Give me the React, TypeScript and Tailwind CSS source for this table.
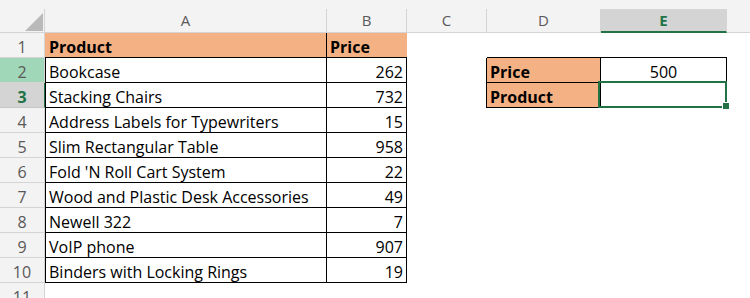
import { ReactNode } from "react";

/* ─────────────────────── Sheet data ─────────────────────── */
const PRODUCTS: [string, number][] = [
  ["Bookcase", 262],
  ["Stacking Chairs", 732],
  ["Address Labels for Typewriters", 15],
  ["Slim Rectangular Table", 958],
  ["Fold 'N Roll Cart System", 22],
  ["Wood and Plastic Desk Accessories", 49],
  ["Newell 322", 7],
  ["VoIP phone", 907],
  ["Binders with Locking Rings", 19],
];

const COLS = [
  { key: "A", w: "w-[282px]" },
  { key: "B", w: "w-[80px]" },
  { key: "C", w: "w-[80px]" },
  { key: "D", w: "w-[114px]" },
  { key: "E", w: "w-[126px]" },
];

/* ─────────────────────── Cells ─────────────────────── */
function Cell({
  className = "",
  children,
}: {
  className?: string;
  children?: ReactNode;
}) {
  return (
    <div className={`relative flex h-[25px] shrink-0 items-end text-[16px] leading-[20px] text-black ${className}`}>
      {children}
    </div>
  );
}

function RowHead({ n }: { n: number }) {
  const cls =
    n === 2
      ? "bg-[#a0d7b8] text-[#595959] border-r border-[#d4d4d4]"
      : n === 3
      ? "bg-[#d4d4d4] text-[#217346] font-bold border-r border-r-[#217346] border-b-[#c6c6c6]"
      : "bg-[#f3f3f3] text-[#595959] border-r border-[#d4d4d4]";
  return (
    <div
      className={`flex h-[25px] w-[45px] shrink-0 items-end justify-center border-b border-[#d4d4d4] text-[16px] leading-[20px] ${cls}`}
    >
      {n}
    </div>
  );
}

function Selection() {
  return (
    <div className="pointer-events-none absolute -left-[3px] -top-[2px] h-[27px] w-[129px] border-2 border-[#217346]">
      <div className="absolute -bottom-[4px] -right-[5px] h-[8px] w-[8px] border border-white bg-[#217346]" />
    </div>
  );
}

/* ─────────────────────── Header ─────────────────────── */
function ColumnHeader() {
  return (
    <div className="flex h-[33px] items-end bg-[#f3f3f3]">
      <div className="flex h-[24px] w-[45px] shrink-0 items-end justify-end border-b border-r border-[#d4d4d4] pb-px pr-px">
        <svg width="18" height="18" viewBox="0 0 18 18">
          <polygon points="18,0 18,18 0,18" fill="#b9b9b9" />
        </svg>
      </div>
      {COLS.map((c) =>
        c.key === "E" ? (
          <div
            key={c.key}
            className={`flex h-[24px] ${c.w} shrink-0 items-center justify-center border-b-2 border-r border-b-[#217346] border-r-[#d4d4d4] bg-[#d4d4d4] text-[15px] font-bold text-[#217346]`}
          >
            {c.key}
          </div>
        ) : (
          <div
            key={c.key}
            className={`flex h-[24px] ${c.w} shrink-0 items-center justify-center border-b border-r border-[#d4d4d4] text-[15px] text-[#595959]`}
          >
            {c.key}
          </div>
        )
      )}
      <div className="h-[24px] flex-1 border-b border-[#d4d4d4]" />
    </div>
  );
}

/* ─────────────────────── App ─────────────────────── */
export default function App() {
  return (
    <div className="h-[298px] w-[750px] overflow-hidden bg-white font-['Open_Sans',sans-serif]">
      <ColumnHeader />

      {/* row 1 */}
      <div className="flex">
        <RowHead n={1} />
        <Cell className="w-[282px] border-b border-r border-black bg-[#f4b183] pl-[4px] font-bold">Product</Cell>
        <Cell className="w-[80px] border-b border-black bg-[#f4b183] pl-[3px] font-bold">Price</Cell>
        <Cell className="w-[80px]" />
        <Cell className="w-[114px] border-b border-black" />
        <Cell className="w-[126px] border-b border-black" />
      </div>

      {PRODUCTS.map(([name, price], i) => {
        const n = i + 2;
        return (
          <div key={name} className="flex">
            <RowHead n={n} />
            <Cell className="w-[282px] border-b border-l border-r border-black pl-[3px]">{name}</Cell>
            <Cell className="w-[80px] justify-end border-b border-r border-black pr-[3px]">{price}</Cell>
            {n === 2 && (
              <>
                <Cell className="w-[80px] border-r border-black" />
                <Cell className="w-[114px] border-b border-r border-black bg-[#f4b183] pl-[3px] font-bold">Price</Cell>
                <Cell className="w-[126px] justify-center border-b border-r border-black">500</Cell>
              </>
            )}
            {n === 3 && (
              <>
                <Cell className="w-[80px] border-r border-black" />
                <Cell className="w-[114px] border-b border-r border-black bg-[#f4b183] pl-[3px] font-bold">Product</Cell>
                <Cell className="w-[126px] border-b border-r border-black">
                  <Selection />
                </Cell>
              </>
            )}
          </div>
        );
      })}

      <div className="flex">
        <RowHead n={11} />
      </div>
    </div>
  );
}
